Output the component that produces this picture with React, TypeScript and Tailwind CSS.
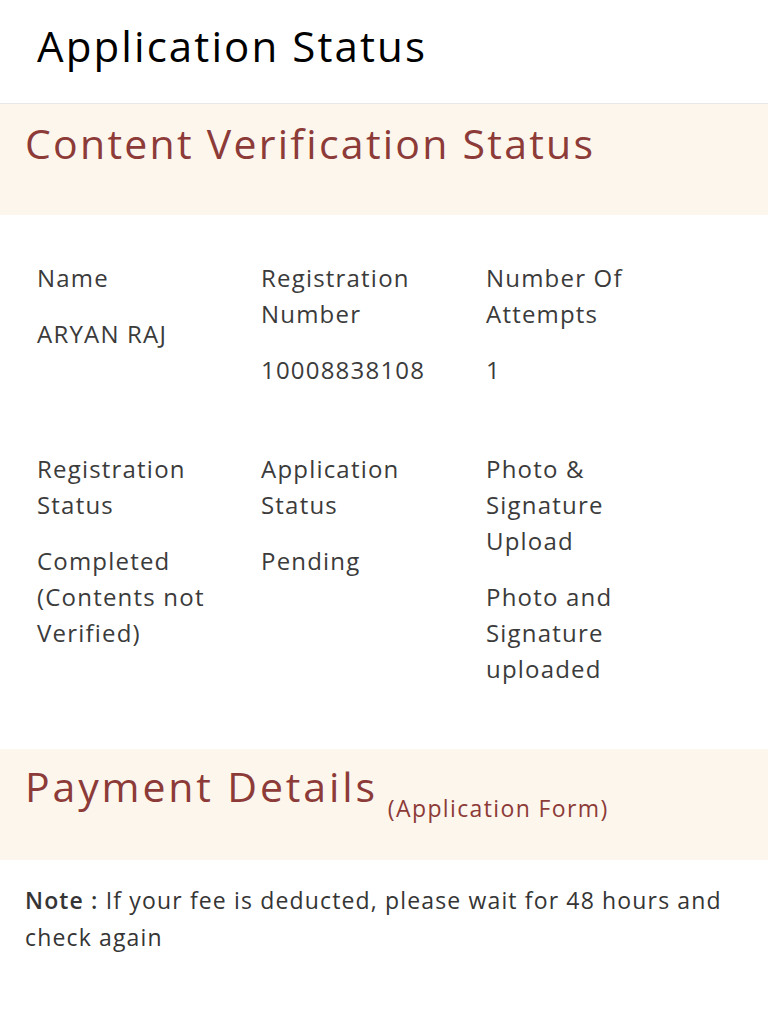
import React from "react";

type Field = { label: string; value: string };

const rowOne: Field[] = [
  { label: "Name", value: "ARYAN RAJ" },
  { label: "Registration Number", value: "10008838108" },
  { label: "Number Of Attempts", value: "1" },
];

const rowTwo: Field[] = [
  { label: "Registration Status", value: "Completed (Contents not Verified)" },
  { label: "Application Status", value: "Pending" },
  { label: "Photo & Signature Upload", value: "Photo and Signature uploaded" },
];

function FieldRow({ fields }: { fields: Field[] }) {
  return (
    <div className="grid grid-cols-[224px_225px_224px] pl-[37px]">
      {fields.map((f) => (
        <div
          key={f.label}
          className="pr-[20px] text-[24px] leading-[36px] tracking-[0.05em] text-[#3b3b3b]"
        >
          <div>{f.label}</div>
          <div className="mt-[20px]">{f.value}</div>
        </div>
      ))}
    </div>
  );
}

export default function App() {
  return (
    <div
      className="min-h-[1024px] w-[768px] bg-white"
      style={{ fontFamily: "'Open Sans', 'Noto Sans', sans-serif" }}
    >
      <header className="h-[104px] border-b border-[#e8e8e8] pl-[37px] pt-[20px]">
        <h1 className="text-[42px] leading-[52px] tracking-[0.05em] text-black">Application Status</h1>
      </header>

      <section className="h-[111px] bg-[#fdf6ed] pl-[25px] pt-[13px]">
        <h2 className="text-[41px] leading-[52px] tracking-[0.055em] text-[#8c3b38]">
          Content Verification Status
        </h2>
      </section>

      <div className="pt-[45px]">
        <FieldRow fields={rowOne} />
        <div className="h-[63px]" />
        <FieldRow fields={rowTwo} />
      </div>

      <section className="mt-[62px] h-[111px] bg-[#fdf6ed] pl-[25px] pt-[11px]">
        <h2 className="text-[41px] leading-[52px] tracking-[0.07em] text-[#8c3b38]">
          Payment Details
          <span className="ml-[10px] align-[-15px] text-[23px] tracking-[0.06em]">(Application Form)</span>
        </h2>
      </section>

      <p className="px-[25px] pt-[22px] text-[23px] leading-[37px] tracking-[0.05em] text-[#353535]">
        <span className="font-semibold">Note :&nbsp;</span>
        <span>If your fee is deducted, please wait for 48 hours and check again</span>
      </p>
    </div>
  );
}
